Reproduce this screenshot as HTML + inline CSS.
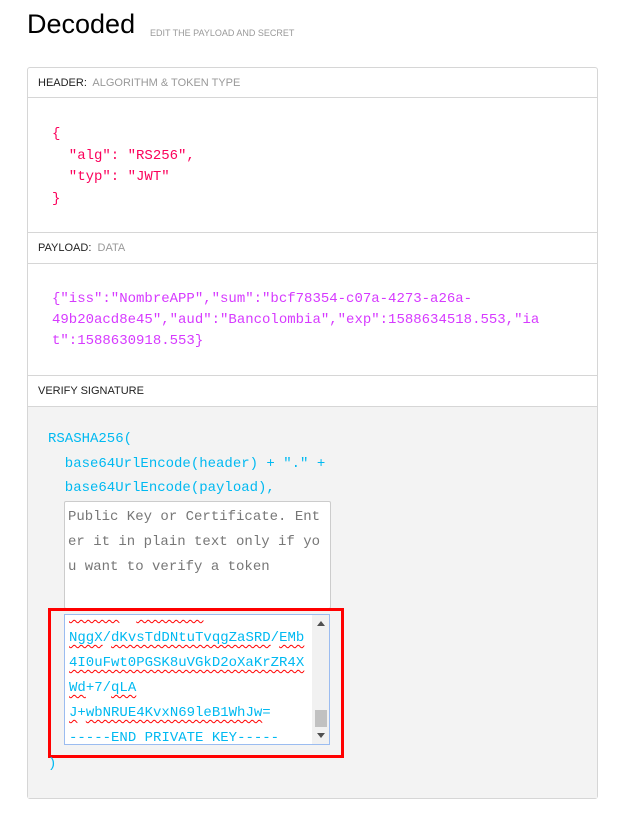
<!DOCTYPE html>
<html><head><meta charset="utf-8"><style>
body{margin:0;background:#fff;width:620px;height:822px;overflow:hidden;font-family:"Liberation Sans",sans-serif;position:relative}
.abs{position:absolute}
.mono{font-family:"Liberation Mono",monospace;font-size:14px;white-space:pre}
.card{position:absolute;left:27px;top:67px;width:569px;height:730px;border:1px solid #d6d6d6;border-radius:3px;}
.hd{position:absolute;left:0;width:569px;height:30px;border-bottom:1px solid #d6d6d6;font-size:11px;color:#222;line-height:31px;padding-left:10px;box-sizing:border-box}
.hd span{color:#999}
.sq{text-decoration:underline wavy red;text-decoration-thickness:1px;text-underline-offset:3px}
</style></head><body>
<div class="abs" style="left:27px;top:9px;font-size:27px;color:#000">Decoded</div>
<div class="abs" style="left:150px;top:28px;font-size:9px;color:#999">EDIT THE PAYLOAD AND SECRET</div>
<div class="card">
 <div class="hd" style="top:0">HEADER:&nbsp; <span>ALGORITHM &amp; TOKEN TYPE</span></div>
 <div class="mono abs" style="left:24px;top:56px;line-height:21.5px;color:#fb015b">{
  "alg": "RS256",
  "typ": "JWT"
}</div>
 <div class="hd" style="top:164px;border-top:1px solid #d6d6d6;height:32px">PAYLOAD:&nbsp; <span>DATA</span></div>
 <div class="mono abs" style="left:24px;top:221px;line-height:21px;color:#d63aff">{"iss":"NombreAPP","sum":"bcf78354-c07a-4273-a26a-
49b20acd8e45","aud":"Bancolombia","exp":1588634518.553,"ia
t":1588630918.553}</div>
 <div class="hd" style="top:307px;border-top:1px solid #d6d6d6;height:32px">VERIFY SIGNATURE</div>
 <div class="abs" style="left:0;top:339px;width:569px;height:391px;background:#f3f3f3"></div>
 <div class="mono abs" style="left:20px;top:359px;line-height:24.5px;color:#00b9f1">RSASHA256(
  base64UrlEncode(header) + "." +
  base64UrlEncode(payload),</div>
 <div class="abs" style="left:36px;top:433px;width:265px;height:106px;background:#fff;border:1px solid #ccc;border-radius:2px"></div>
 <div class="mono abs" style="left:40px;top:437px;line-height:25px;color:#777">Public Key or Certificate. Ent
er it in plain text only if yo
u want to verify a token</div>
 <div class="abs" style="left:20px;top:540px;width:290px;height:144px;border:3px solid #f00"></div>
 <div class="abs" style="left:36px;top:546px;width:264px;height:129px;background:#fff;border:1px solid #9bbcf0;overflow:hidden">
  <div class="mono abs" style="left:4px;top:-14px;line-height:25px;color:#00b9f1"><span class="sq">      </span>  <span class="sq">        </span>
<span class="sq">NggX</span>/<span class="sq">dKvsTdDNtuTvqgZaSRD</span>/<span class="sq">EMb</span>
<span class="sq">4I0uFwt0PGSK8uVGkD2oXaKrZR4X</span>
<span class="sq">Wd</span>+7/<span class="sq">qLA</span>
<span class="sq">J</span>+<span class="sq">wbNRUE4KvxN69leB1WhJw</span>=
-----<span class="sq">END</span> <span class="sq">PRIVATE</span> <span class="sq">KEY</span>-----</div>
  <div class="abs" style="left:247px;top:0;width:17px;height:129px;background:#f1f1f1"></div>
  <div class="abs" style="left:250px;top:95px;width:12px;height:17px;background:#c1c1c1"></div>
  <div class="abs" style="left:252px;top:6px;width:0;height:0;border-left:4px solid transparent;border-right:4px solid transparent;border-bottom:5px solid #505050"></div>
  <div class="abs" style="left:252px;top:118px;width:0;height:0;border-left:4px solid transparent;border-right:4px solid transparent;border-top:5px solid #505050"></div>
 </div>
 <div class="mono abs" style="left:20px;top:688px;color:#00b9f1">)</div>
</div>
</body></html>
